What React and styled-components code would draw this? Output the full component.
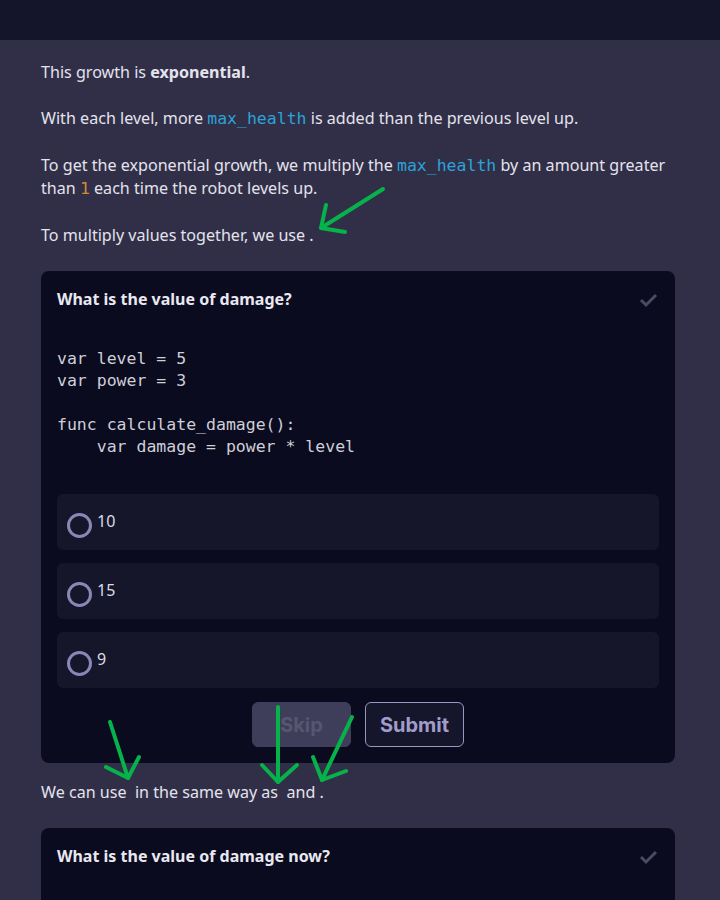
import React from 'react';
import styled, { createGlobalStyle } from 'styled-components';

const GlobalStyle = createGlobalStyle`
    html, body {
        margin: 0;
        padding: 0;
        background-color: #312f48;
    }
    #root {
        position: relative;
        min-height: 900px;
        overflow: hidden;
    }
`;

const TopBar = styled.div`
    height: 40px;
    background-color: #14152a;
`;

const Content = styled.main`
    width: 634px;
    margin-left: 41px;
    padding-top: 21px;
    font-family: "Noto Sans", "Open Sans", sans-serif;
    font-size: 16.1px;
    line-height: 23px;
    color: #e4e3ec;
`;

const Paragraph = styled.p`
    margin: 0 0 ${(p) => p.$gap || 24}px;
`;

const InlineCode = styled.code`
    font-family: "DejaVu Sans Mono", monospace;
    font-size: 16.5px;
    line-height: 1;
    color: ${(p) => (p.$number ? '#d4892c' : '#2ba3d8')};
`;

const Card = styled.section`
    background-color: #0a0b1f;
    border-radius: 8px;
    padding: 16px 16px 16px;
    margin-bottom: 18px;
    min-height: ${(p) => p.$minHeight || 0}px;
`;

const CardHeader = styled.div`
    display: flex;
    align-items: center;
    justify-content: space-between;
    height: 25px;
`;

const Question = styled.h3`
    margin: 0;
    font-family: "Noto Sans", "Open Sans", sans-serif;
    font-size: 16px;
    font-weight: 700;
    color: #e9e8f0;
`;

const CodeBlock = styled.pre`
    margin: 36px 0 36px;
    font-family: "DejaVu Sans Mono", monospace;
    font-size: 16.5px;
    line-height: 22px;
    color: #cfcfd8;
    white-space: pre;
`;

const Options = styled.div`
    display: flex;
    flex-direction: column;
    gap: 13px;
`;

const Option = styled.label`
    display: flex;
    align-items: center;
    gap: 5px;
    height: 56px;
    padding-left: 10px;
    border-radius: 6px;
    background-color: #15162a;
    color: #dcdbe6;
    font-size: 16px;
`;

const Radio = styled.span`
    width: 19px;
    height: 19px;
    border: 3px solid #8c86b8;
    border-radius: 50%;
    margin-top: 6px;
`;

const OptionText = styled.span`
    margin-top: -1px;
`;

const Actions = styled.div`
    display: flex;
    justify-content: center;
    gap: 14px;
    margin-top: 14px;
`;

const Button = styled.button`
    width: 99px;
    height: 45px;
    border-radius: 6px;
    font-family: "Inter", "Lato", sans-serif;
    font-size: 20px;
    font-weight: 700;
    cursor: pointer;
    border: 1px solid ${(p) => (p.$primary ? '#9b97c4' : '#3f3e5a')};
    background-color: ${(p) => (p.$primary ? '#15152b' : '#3f3e5a')};
    color: ${(p) => (p.$primary ? '#a19dca' : '#57556f')};
`;

const Annotations = styled.svg`
    position: absolute;
    top: 0;
    left: 0;
    pointer-events: none;
`;

const Check = () => (
    <svg width="20" height="16" viewBox="0 0 20 16">
        <polyline points="2,8 7,13 17,3" fill="none" stroke="#4a4a62" strokeWidth="3" />
    </svg>
);

const arrows = [
    { shaft: [383, 189, 321, 228], head: [326, 205, 321, 228, 345, 232] },
    { shaft: [110, 722, 128, 778], head: [106, 767, 128, 778, 139, 757] },
    { shaft: [278, 707, 278, 782], head: [262, 765, 278, 782, 297, 765] },
    { shaft: [352, 717, 322, 780], head: [313, 757, 322, 780, 346, 771] },
];

const QuizCard = ({ title, code, options, minHeight }) => (
    <Card $minHeight={minHeight}>
        <CardHeader>
            <Question>{title}</Question>
            <Check />
        </CardHeader>
        {code && <CodeBlock>{code}</CodeBlock>}
        {options && (
            <>
                <Options>
                    {options.map((o) => (
                        <Option key={o}>
                            <Radio />
                            <OptionText>{o}</OptionText>
                        </Option>
                    ))}
                </Options>
                <Actions>
                    <Button disabled>Skip</Button>
                    <Button $primary>Submit</Button>
                </Actions>
            </>
        )}
    </Card>
);

const code = `var level = 5
var power = 3

func calculate_damage():
    var damage = power * level`;

export default function App() {
    return (
        <>
            <GlobalStyle />
            <TopBar />
            <Content>
                <Paragraph $gap={23}>
                    This growth is <strong>exponential</strong>.
                </Paragraph>
                <Paragraph>
                    With each level, more <InlineCode>max_health</InlineCode> is added than the previous level up.
                </Paragraph>
                <Paragraph>
                    To get the exponential growth, we multiply the <InlineCode>max_health</InlineCode> by an amount greater
                    than <InlineCode $number>1</InlineCode> each time the robot levels up.
                </Paragraph>
                <Paragraph $gap={24}>To multiply values together, we use .</Paragraph>
                <QuizCard title="What is the value of damage?" code={code} options={['10', '15', '9']} />
                <Paragraph $gap={24}>We can use &nbsp;in the same way as &nbsp;and .</Paragraph>
                <QuizCard title="What is the value of damage now?" minHeight={120} />
            </Content>
            <Annotations width="720" height="900">
                {arrows.map((a, i) => (
                    <g key={i} stroke="#06b34a" strokeWidth="4" strokeLinecap="round" strokeLinejoin="round" fill="none">
                        <line x1={a.shaft[0]} y1={a.shaft[1]} x2={a.shaft[2]} y2={a.shaft[3]} />
                        <polyline points={a.head.join(' ')} />
                    </g>
                ))}
            </Annotations>
        </>
    );
}
